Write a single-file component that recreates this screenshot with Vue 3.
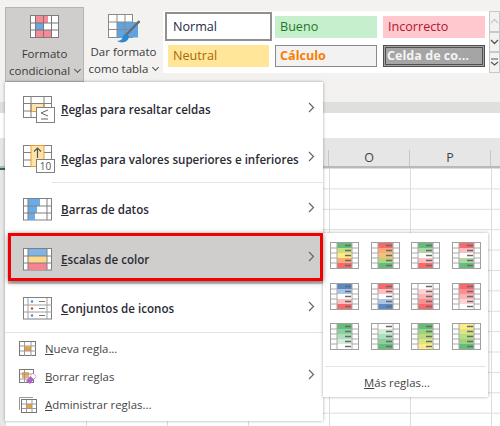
<template>
  <div class="screen">
    <div class="ribbon">
      <button class="rb-btn active">
        <svg class="rb-icon" width="29" height="23" viewBox="0 0 29 23">
          <rect x="0.5" y="0.5" width="28" height="22" fill="#fff" stroke="#7c7c7c" />
          <path d="M5 1h13v7H5zM5 15h16v7H5z" fill="#f78a96" />
          <path d="M5 8h8v7H5z" fill="#6aa8e2" />
          <path d="M1 8h27M1 15h27M5.5 1v21M13.5 1v21M21.5 1v21" fill="none" stroke="#777" />
        </svg>
        <span class="rb-label">Formato<br />condicional <i class="caret"></i></span>
      </button>
      <button class="rb-btn second">
        <svg class="rb-icon" width="32" height="29" viewBox="0 0 32 29">
          <rect x="0.5" y="0.5" width="24" height="23" fill="#fff" stroke="#8a8a8a" />
          <path d="M9 8h21v15.5H9z" fill="#5fa4e2" />
          <path d="M1 8h24M1 15.5h24M9 1v23M17 1v23" fill="none" stroke="#8a8a8a" />
          <path d="M31.5 7L18 21" stroke="#6b6b6b" stroke-width="2.5" />
          <path d="M18 20c-3 0-3 3-4 5-1 1-3 2-5 2 5 3 12 1 12-5z" fill="#2e86d0" />
        </svg>
        <span class="rb-label">Dar formato<br />como tabla <i class="caret"></i></span>
      </button>
      <div class="gallery">
        <div v-for="s in styles" :key="s.name" class="style-cell" :class="s.cls">{{ s.name }}</div>
      </div>
      <div class="scroller">
        <div class="sc-btn"><svg width="9" height="6" viewBox="0 0 9 6"><path d="M1 5l3.5-3.5L8 5" fill="none" stroke="#c8c8c8" stroke-width="1.3" /></svg></div>
        <div class="sc-btn"><svg width="9" height="6" viewBox="0 0 9 6"><path d="M1 1l3.5 3.5L8 1" fill="none" stroke="#555" stroke-width="1.3" /></svg></div>
        <div class="sc-btn"><svg width="9" height="8" viewBox="0 0 9 8"><path d="M1 1h7M1 4l3.5 3L8 4" fill="none" stroke="#555" stroke-width="1.2" /></svg></div>
      </div>
    </div>
    <div class="ribbon-band"></div>
    <div class="formula"></div>
    <div class="col-head">
      <span class="ch"></span>
      <span class="ch">O</span>
      <span class="ch">P</span>
    </div>
    <div class="sheet"><div class="row-strip"></div></div>

    <div class="menu">
      <div class="highlight-box"></div>
      <template v-for="item in items" :key="item.icon">
        <div class="item" :class="[item.small ? 'small' : 'large', { hot: item.hot }]">
          <svg v-if="item.icon === 'lt'" class="mi" width="32" height="28" viewBox="0 0 32 28">
            <rect x="0.5" y="0.5" width="28" height="21" fill="#fff" stroke="#808080" />
            <rect x="8" y="7.5" width="13" height="8" fill="#fde4a6" stroke="#ed9b3a" />
            <path d="M1 7.5h7M1 15h7M21 7.5h8M21 15h8M8 1v21M21 1v21M8 7.5h13" stroke="#808080" fill="none" />
            <rect x="13.5" y="11.5" width="18" height="15" fill="#fff" stroke="#808080" />
            <path d="M25 14l-7 3 7 3M18 23h7" fill="none" stroke="#666" />
          </svg>
          <svg v-else-if="item.icon === 'top'" class="mi" width="32" height="28" viewBox="0 0 32 28">
            <rect x="0.5" y="0.5" width="28" height="21" fill="#fff" stroke="#808080" />
            <rect x="8" y="0.5" width="13" height="21" fill="#fde4a6" stroke="#ed9b3a" />
            <path d="M1 7.5h7M1 15h7M21 7.5h8M21 15h8" stroke="#808080" fill="none" />
            <path d="M14.5 13V3M11 6.5l3.5-3.5 3.5 3.5" fill="none" stroke="#555" stroke-width="1.2" />
            <rect x="13.5" y="14.5" width="18" height="13" fill="#fff" stroke="#808080" />
            <text x="22.5" y="25" class="ten">10</text>
          </svg>
          <svg v-else-if="item.icon === 'bars'" class="mi" width="32" height="23" viewBox="0 0 32 23">
            <rect x="0.5" y="0.5" width="28" height="21.5" fill="#fff" stroke="#808080" />
            <path d="M5 1h12v7h-3v7h-2v7H5z" fill="#6aabe8" />
            <path d="M1 8h28M1 15h28M5 1v21M24 1v21" stroke="#808080" fill="none" />
          </svg>
          <svg v-else-if="item.icon === 'scale'" class="mi" width="32" height="23" viewBox="0 0 32 23">
            <rect x="0.5" y="0.5" width="28" height="21.5" fill="#fff" stroke="#808080" />
            <rect x="5" y="1" width="19" height="7" fill="#7eb4e6" />
            <rect x="5" y="8" width="19" height="7" fill="#fbd98a" />
            <rect x="5" y="15" width="19" height="7" fill="#f7838e" />
            <path d="M1 8h28M1 15h28M5 1v21M24 1v21" stroke="#808080" fill="none" />
          </svg>
          <svg v-else-if="item.icon === 'sets'" class="mi" width="32" height="23" viewBox="0 0 32 23">
            <rect x="0.5" y="0.5" width="28" height="21.5" fill="#fff" stroke="#808080" />
            <path d="M1 8h28M1 15h28M5 1v21M24 1v21" stroke="#a0a0a0" fill="none" />
            <circle cx="9" cy="4.5" r="1.2" fill="#3c8ee0" />
            <circle cx="9" cy="11.5" r="1.2" fill="#ef3340" />
            <circle cx="9" cy="18.5" r="1.2" fill="#3c8ee0" />
            <path d="M16 4.5h6M16 11.5h6M16 18.5h6" stroke="#777" />
          </svg>
          <svg v-else-if="item.icon === 'new'" class="mi" width="18" height="16" viewBox="0 0 18 16">
            <rect x="0.5" y="0.5" width="16" height="14" fill="#fff" stroke="#777" />
            <rect x="6" y="5.5" width="6" height="4.5" fill="#f29d38" />
            <path d="M1 5h16M1 10h16M5.5 1v14M12 1v14" stroke="#999" fill="none" />
          </svg>
          <svg v-else-if="item.icon === 'clear'" class="mi" width="18" height="16" viewBox="0 0 18 16">
            <rect x="0.5" y="0.5" width="14" height="13" fill="#fff" stroke="#777" />
            <rect x="3" y="3" width="7" height="6" fill="#f2ad60" />
            <path d="M1 5h13M1 10h13M5.5 1v13" stroke="#999" fill="none" />
            <path d="M14 4l3.5 3.5-6.5 7.5-4-3z" fill="#b264c8" />
            <path d="M14 4.5l3 3-2.5 2.5-3-3z" fill="#fff" />
          </svg>
          <svg v-else class="mi" width="18" height="16" viewBox="0 0 18 16">
            <path d="M0.5 13V0.5H14" fill="none" stroke="#999" />
            <rect x="2.5" y="2.5" width="15" height="13" fill="#fff" stroke="#777" />
            <rect x="8" y="7" width="5" height="4.5" fill="#f29d38" />
            <path d="M3 7h14M3 11.5h14M7.5 3v12M13 3v12" stroke="#999" fill="none" />
          </svg>
          <span class="label"><u>{{ item.key }}</u>{{ item.rest }}</span>
          <svg v-if="item.arrow" class="chev" width="7" height="11" viewBox="0 0 7 11"><path d="M1 1l4.5 4.5L1 10" fill="none" stroke="#666" stroke-width="1.2" /></svg>
        </div>
        <div v-if="item.sep" class="sep" :class="item.sep"></div>
      </template>
    </div>

    <div class="submenu">
      <div class="scales">
        <svg v-for="(scale, i) in scales" :key="i" class="scale" width="29" height="27" viewBox="0 0 29 27">
          <rect x="0.5" y="0.5" width="28" height="26" fill="#fff" stroke="#a0a0a0" />
          <rect v-for="(c, j) in scale" :key="j" x="7" :y="1 + j * 5" width="15" height="5" :fill="c" />
          <path d="M1 6h6M22 6h6M1 11h6M22 11h6M1 16h6M22 16h6M1 21h6M22 21h6M7 1v25M22 1v25" fill="none" stroke="#a8a8a8" />
          <path d="M15 3.5h6M15 8.5h6M15 13.5h6M15 18.5h6M15 23.5h6" fill="none" stroke="#6a6a6a" stroke-width="1.5" />
        </svg>
      </div>
      <div class="more"><span><u>M</u>ás reglas...</span></div>
    </div>
  </div>
</template>

<script setup>
const styles = [
  { name: 'Normal', cls: 'normal' },
  { name: 'Bueno', cls: 'good' },
  { name: 'Incorrecto', cls: 'bad' },
  { name: 'Neutral', cls: 'neutral' },
  { name: 'Cálculo', cls: 'calc' },
  { name: 'Celda de co...', cls: 'check' }
]

const items = [
  { icon: 'lt', key: 'R', rest: 'eglas para resaltar celdas', arrow: true },
  { icon: 'top', key: 'R', rest: 'eglas para valores superiores e inferiores', arrow: true, sep: 'inset' },
  { icon: 'bars', key: 'B', rest: 'arras de datos', arrow: true },
  { icon: 'scale', key: 'E', rest: 'scalas de color', arrow: true, hot: true },
  { icon: 'sets', key: 'C', rest: 'onjuntos de iconos', arrow: true, sep: 'full' },
  { icon: 'new', key: 'N', rest: 'ueva regla...', small: true },
  { icon: 'clear', key: 'B', rest: 'orrar reglas', small: true, arrow: true },
  { icon: 'manage', key: 'A', rest: 'dministrar reglas...', small: true }
]

const g = '#63be7b'
const r = '#f8696b'
const y = '#ffeb84'
const w = '#ffffff'
const b = '#5a8ac6'
const scales = [
  [g, '#cbdc81', y, '#fbaa77', r],
  [r, '#fbaa77', '#f0c27c', '#b1d580', g],
  [g, '#b1d5a8', w, '#fcbfc0', r],
  [r, '#fcbfc0', w, '#b1d5a8', g],
  [b, '#a9c4e4', w, '#fcbfc0', r],
  [r, '#fcbfc0', w, '#a9c4e4', b],
  [w, '#fcd4d5', '#fbb4b5', '#fa8f90', r],
  [r, '#fa8f90', '#fbb4b5', '#fcd4d5', w],
  [g, '#8ccf9d', '#aedeba', '#d3edd9', w],
  [w, '#d3edd9', '#aedeba', '#8ccf9d', g],
  [g, '#9bd37f', '#b9dc80', '#dce582', y],
  [y, '#dce582', '#b9dc80', '#9bd37f', g]
]
</script>

<style>
html,
body {
  margin: 0;
  background: #fff;
}
</style>

<style scoped>
.screen {
  position: relative;
  width: 500px;
  height: 426px;
  overflow: hidden;
  display: flex;
  flex-direction: column;
  font-family: "Open Sans", "Liberation Sans", sans-serif;
  color: #3a3a3a;
  background: #fff;
}

.ribbon {
  height: 102px;
  flex: none;
  background: #f3f2f1;
  display: flex;
  align-items: flex-start;
  padding: 7px 0 0 5px;
  box-sizing: border-box;
}

.rb-btn {
  border: 0;
  background: none;
  padding: 0;
  font: inherit;
  color: inherit;
  display: flex;
  flex-direction: column;
  align-items: center;
  flex: none;
  width: 79px;
  height: 75px;
  box-sizing: border-box;
}

.rb-btn.active {
  background: #cfcecc;
  border: 1px solid #b5b4b2;
}

.rb-icon {
  margin-top: 7px;
  flex: none;
}

.rb-label {
  font-size: 11.5px;
  line-height: 17px;
  margin-top: 7px;
  white-space: nowrap;
  text-align: center;
}

.second .rb-label {
  margin-top: 0;
}

.caret {
  display: inline-block;
  width: 4px;
  height: 4px;
  border-right: 1px solid #555;
  border-bottom: 1px solid #555;
  transform: rotate(45deg);
  margin: 0 0 3px 2px;
}

.gallery {
  flex: none;
  width: 326px;
  height: 62px;
  margin-top: 4px;
  background: #fff;
  display: grid;
  grid-template-columns: 101px 102px 102px;
  grid-auto-rows: 22px;
  column-gap: 6px;
  row-gap: 7px;
  padding: 5px 0 0 5px;
  box-sizing: border-box;
}

.style-cell {
  font-size: 12.6px;
  line-height: 22px;
  padding-left: 5px;
  font-weight: 500;
  box-sizing: border-box;
  white-space: nowrap;
}

.normal {
  border: 2px solid #909090;
  background: #fff;
  color: #1f2a44;
  margin: -4px -3px -3px -3px;
  padding-left: 6px;
  line-height: 25px;
}

.good {
  background: #c6efce;
  color: #1f7a1f;
}

.bad {
  background: #ffc7ce;
  color: #b3142a;
}

.neutral {
  background: #ffe699;
  color: #a8660a;
}

.calc {
  background: #f2f2f2;
  border: 1px solid #8a8a8a;
  color: #fa7d00;
  font-weight: 700;
  line-height: 20px;
  padding-left: 4px;
}

.check {
  background: #a5a5a5;
  border: 3px double #4f4f4f;
  color: #f4f4f4;
  font-weight: 700;
  line-height: 16px;
  padding-left: 1px;
}

.scroller {
  flex: none;
  display: flex;
  flex-direction: column;
  margin-top: 4px;
  width: 11px;
}

.sc-btn {
  height: 20.5px;
  width: 11px;
  border: 1px solid #c8c8c8;
  box-sizing: border-box;
  display: flex;
  align-items: center;
  justify-content: center;
  background: #f3f2f1;
}

.ribbon-band {
  height: 11px;
  flex: none;
  background: #dfdfde;
}

.formula {
  height: 25px;
  flex: none;
  background: #fff;
}

.col-head {
  height: 30px;
  flex: none;
  background: #e6e6e6;
  border-bottom: 2px solid #b9b9b9;
  display: grid;
  grid-template-columns: 329px 81px 81px;
  box-sizing: border-box;
}

.ch {
  font-size: 12.5px;
  line-height: 16px;
  margin-top: 12px;
  text-align: center;
  border-right: 1px solid #c6c6c6;
  color: #444;
}

.sheet {
  flex: 1;
  background-image:
    linear-gradient(#dcdcdc 1px, transparent 1px),
    linear-gradient(90deg, #dcdcdc 1px, transparent 1px);
  background-size: 81px 20.4px;
  background-position: 329px 0;
}

.row-strip {
  width: 5px;
  height: 100%;
  background: #e8e8e8;
  border-top: 2px solid #217346;
  box-sizing: border-box;
}

.menu {
  position: absolute;
  left: 5px;
  top: 82px;
  width: 318px;
  height: 339px;
  background: #fff;
  box-shadow: 0 0 3px rgba(0, 0, 0, 0.35);
  padding-top: 3px;
  box-sizing: border-box;
}

.item {
  display: flex;
  align-items: center;
  position: relative;
  box-sizing: border-box;
}

.item.large {
  height: 49.5px;
  padding-left: 18px;
  font-weight: 600;
  font-size: 11.6px;
}

.item.small {
  height: 28px;
  padding-left: 14px;
  font-size: 11.4px;
}

.item.hot {
  background: #cfcecc;
  margin-left: 3px;
  padding-left: 15px;
}

.hot .chev {
  left: 300px;
}

.large .mi {
  flex: none;
  margin-right: 6px;
}

.small .mi {
  flex: none;
  margin-right: 8px;
}

.label {
  white-space: nowrap;
  color: #2b2b35;
}

.small .label {
  color: #444;
}

.chev {
  position: absolute;
  left: 303px;
  top: 50%;
  margin-top: -8px;
}

.sep {
  height: 1px;
  background: #e3e3e3;
  margin: -2px 0 2px;
}

.sep.inset {
  margin-left: 47px;
}

.ten {
  font: 10px "Open Sans", sans-serif;
  text-anchor: middle;
  fill: #555;
}

.highlight-box {
  position: absolute;
  left: 3px;
  top: 151px;
  width: 315px;
  height: 48px;
  border: 3px solid #f00000;
  box-shadow: 0 1px 5px rgba(0, 0, 0, 0.5);
  z-index: 2;
  box-sizing: border-box;
  pointer-events: none;
}

.submenu {
  position: absolute;
  left: 323px;
  top: 233px;
  width: 165px;
  height: 164px;
  background: #fff;
  box-shadow: 0 0 3px rgba(0, 0, 0, 0.35);
  display: flex;
  flex-direction: column;
}

.scales {
  display: grid;
  grid-template-columns: repeat(4, 29px);
  grid-auto-rows: 27px;
  column-gap: 11.6px;
  row-gap: 13.6px;
  padding: 9px 0 0 7px;
  height: 133px;
  box-sizing: border-box;
}

.more {
  border-top: 1px solid #e3e3e3;
  margin: 0 2px;
  flex: 1;
  display: flex;
  align-items: center;
  justify-content: center;
  font-size: 11.4px;
  color: #444;
  padding-right: 17px;
}
</style>
